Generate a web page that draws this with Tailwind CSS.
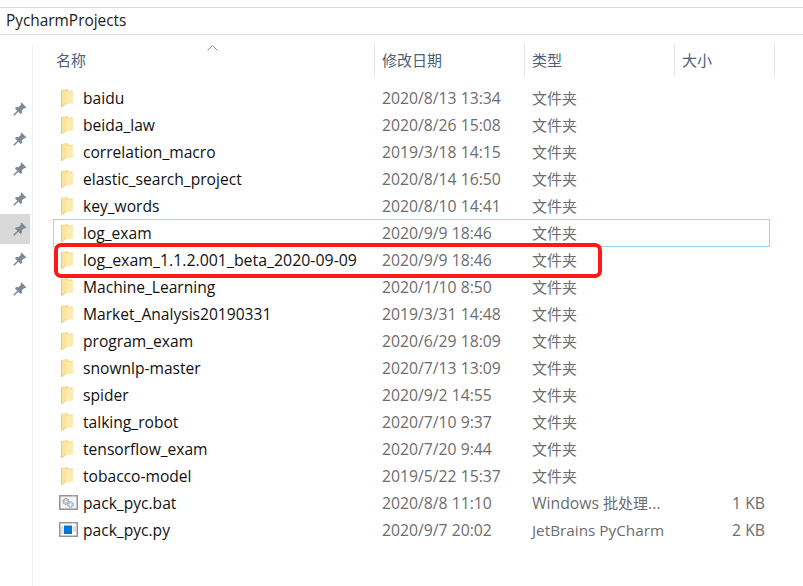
<!doctype html>
<html lang="zh">

  <head>
    <meta charset="UTF-8" />
    <title>PycharmProjects</title>
    <script src="https://cdn.jsdelivr.net/npm/@tailwindcss/browser@4"></script>
  </head>

  <body class="bg-white">
    <svg class="hidden">
      <symbol id="folder" viewBox="0 0 12 18">
        <path d="M0 1 L7 0 L7 1.5 L12 1.5 L12 14.5 L6 14.5 L1.5 18 L0 18 Z" fill="#f5d98a"/>
        <path d="M2.5 4 L7 2.5 L12 2.5 L12 14 L2.5 14 Z" fill="#fdeab0"/>
        <path d="M1 2 L5.5 1 L5.5 13 L1 16.5 Z" fill="#fce39c"/>
        <path d="M0 1 L0 18 L1 17.5 L1 1.5 Z" fill="#e9cb7c"/>
      </symbol>
      <symbol id="pin" viewBox="0 0 14 14">
        <path d="M8.6 0.6 L13.4 5.4 L12.2 6.4 L11.2 6 L8.8 8.6 L9 11 L7.6 12 L2 6.4 L3 5 L5.4 5.2 L8 2.8 L7.6 1.8 Z" fill="#7e8992"/>
        <path d="M5 9 L0.8 13.2" stroke="#7e8992" stroke-width="1.5"/>
      </symbol>
    </svg>

    <div class="h-[586px] overflow-hidden relative font-['Open_Sans','Noto_Sans_CJK_SC',sans-serif]">

      <!-- Path bar -->
      <div class="mt-[7px] h-[28px] border-y border-[#dcdcdc] px-[6px] pb-[1px] flex items-center text-[15.4px] text-[#222]">PycharmProjects</div>

      <div class="flex pt-[9px]">
        <!-- Quick access pins -->
        <div class="w-[33px] h-[542px] border-r border-[#f0f0f0] pt-[50px] flex flex-col">
          <div class="h-[30px] w-[30px] pl-[13px] flex items-center"><svg class="w-[14px] h-[14px]"><use href="#pin"/></svg></div>
          <div class="h-[30px] w-[30px] pl-[13px] flex items-center"><svg class="w-[14px] h-[14px]"><use href="#pin"/></svg></div>
          <div class="h-[30px] w-[30px] pl-[13px] flex items-center"><svg class="w-[14px] h-[14px]"><use href="#pin"/></svg></div>
          <div class="h-[30px] w-[30px] pl-[13px] flex items-center"><svg class="w-[14px] h-[14px]"><use href="#pin"/></svg></div>
          <div class="h-[30px] w-[30px] pl-[13px] flex items-center bg-[#d9d9d9]"><svg class="w-[14px] h-[14px]"><use href="#pin"/></svg></div>
          <div class="h-[30px] w-[30px] pl-[13px] flex items-center"><svg class="w-[14px] h-[14px]"><use href="#pin"/></svg></div>
          <div class="h-[30px] w-[30px] pl-[13px] flex items-center"><svg class="w-[14px] h-[14px]"><use href="#pin"/></svg></div>
        </div>

        <!-- File list -->
        <div class="flex-1">
          <div class="grid grid-cols-[342px_150px_150px_100px] h-[32px] text-[15px] text-[#4c607a]">
            <div class="relative pl-[23px] flex items-center border-r border-[#e5e5e5]">名称
              <svg class="absolute left-[174px] top-[1px] w-[11px] h-[6px]" viewBox="0 0 11 6" fill="none" stroke="#8a8a8a"><path d="M0.5 5.5 L5.5 0.5 L10.5 5.5"/></svg>
            </div>
            <div class="pl-[7px] flex items-center border-r border-[#e5e5e5]">修改日期</div>
            <div class="pl-[7px] flex items-center border-r border-[#e5e5e5]">类型</div>
            <div class="pl-[7px] flex items-center border-r border-[#e5e5e5]">大小</div>
          </div>

          <div class="mt-[8px] ml-[20px] w-[717px] text-[15.75px] leading-[24px] text-[#6d6d6d]">
            <div class="grid grid-cols-[322px_150px_150px_95px] h-[27px] pt-[1px] items-center"><div class="flex items-center gap-[10px] pl-[8px] text-[#111] text-[15.6px]"><svg class="w-[12px] h-[18px]"><use href="#folder"/></svg>baidu</div><div class="pl-[7px]">2020/8/13 13:34</div><div class="pl-[7px] text-[15px]">文件夹</div></div>
            <div class="grid grid-cols-[322px_150px_150px_95px] h-[27px] pt-[1px] items-center"><div class="flex items-center gap-[10px] pl-[8px] text-[#111] text-[15.6px]"><svg class="w-[12px] h-[18px]"><use href="#folder"/></svg>beida_law</div><div class="pl-[7px]">2020/8/26 15:08</div><div class="pl-[7px] text-[15px]">文件夹</div></div>
            <div class="grid grid-cols-[322px_150px_150px_95px] h-[27px] pt-[1px] items-center"><div class="flex items-center gap-[10px] pl-[8px] text-[#111] text-[15.6px]"><svg class="w-[12px] h-[18px]"><use href="#folder"/></svg>correlation_macro</div><div class="pl-[7px]">2019/3/18 14:15</div><div class="pl-[7px] text-[15px]">文件夹</div></div>
            <div class="grid grid-cols-[322px_150px_150px_95px] h-[27px] pt-[1px] items-center"><div class="flex items-center gap-[10px] pl-[8px] text-[#111] text-[15.6px]"><svg class="w-[12px] h-[18px]"><use href="#folder"/></svg>elastic_search_project</div><div class="pl-[7px]">2020/8/14 16:50</div><div class="pl-[7px] text-[15px]">文件夹</div></div>
            <div class="grid grid-cols-[322px_150px_150px_95px] h-[27px] pt-[1px] items-center"><div class="flex items-center gap-[10px] pl-[8px] text-[#111] text-[15.6px]"><svg class="w-[12px] h-[18px]"><use href="#folder"/></svg>key_words</div><div class="pl-[7px]">2020/8/10 14:41</div><div class="pl-[7px] text-[15px]">文件夹</div></div>
            <div class="relative grid grid-cols-[322px_150px_150px_95px] h-[27px] pt-[1px] items-center"><div class="absolute inset-x-0 top-0 -bottom-px border border-[#99d1ff]"></div><div class="flex items-center gap-[10px] pl-[8px] text-[#111] text-[15.6px]"><svg class="w-[12px] h-[18px]"><use href="#folder"/></svg>log_exam</div><div class="pl-[7px]">2020/9/9 18:46</div><div class="pl-[7px] text-[15px]">文件夹</div></div>
            <div class="grid grid-cols-[322px_150px_150px_95px] h-[27px] pt-[1px] items-center"><div class="flex items-center gap-[10px] pl-[8px] text-[#111] text-[15.9px]"><svg class="w-[12px] h-[18px]"><use href="#folder"/></svg>log_exam_1.1.2.001_beta_2020-09-09</div><div class="pl-[7px]">2020/9/9 18:46</div><div class="pl-[7px] text-[15px]">文件夹</div></div>
            <div class="grid grid-cols-[322px_150px_150px_95px] h-[27px] pt-[1px] items-center"><div class="flex items-center gap-[10px] pl-[8px] text-[#111] text-[15.6px]"><svg class="w-[12px] h-[18px]"><use href="#folder"/></svg>Machine_Learning</div><div class="pl-[7px]">2020/1/10 8:50</div><div class="pl-[7px] text-[15px]">文件夹</div></div>
            <div class="grid grid-cols-[322px_150px_150px_95px] h-[27px] pt-[1px] items-center"><div class="flex items-center gap-[10px] pl-[8px] text-[#111] text-[15.6px]"><svg class="w-[12px] h-[18px]"><use href="#folder"/></svg>Market_Analysis20190331</div><div class="pl-[7px]">2019/3/31 14:48</div><div class="pl-[7px] text-[15px]">文件夹</div></div>
            <div class="grid grid-cols-[322px_150px_150px_95px] h-[27px] pt-[1px] items-center"><div class="flex items-center gap-[10px] pl-[8px] text-[#111] text-[15.6px]"><svg class="w-[12px] h-[18px]"><use href="#folder"/></svg>program_exam</div><div class="pl-[7px]">2020/6/29 18:09</div><div class="pl-[7px] text-[15px]">文件夹</div></div>
            <div class="grid grid-cols-[322px_150px_150px_95px] h-[27px] pt-[1px] items-center"><div class="flex items-center gap-[10px] pl-[8px] text-[#111] text-[15.6px]"><svg class="w-[12px] h-[18px]"><use href="#folder"/></svg>snownlp-master</div><div class="pl-[7px]">2020/7/13 13:09</div><div class="pl-[7px] text-[15px]">文件夹</div></div>
            <div class="grid grid-cols-[322px_150px_150px_95px] h-[27px] pt-[1px] items-center"><div class="flex items-center gap-[10px] pl-[8px] text-[#111] text-[15.6px]"><svg class="w-[12px] h-[18px]"><use href="#folder"/></svg>spider</div><div class="pl-[7px]">2020/9/2 14:55</div><div class="pl-[7px] text-[15px]">文件夹</div></div>
            <div class="grid grid-cols-[322px_150px_150px_95px] h-[27px] pt-[1px] items-center"><div class="flex items-center gap-[10px] pl-[8px] text-[#111] text-[15.6px]"><svg class="w-[12px] h-[18px]"><use href="#folder"/></svg>talking_robot</div><div class="pl-[7px]">2020/7/10 9:37</div><div class="pl-[7px] text-[15px]">文件夹</div></div>
            <div class="grid grid-cols-[322px_150px_150px_95px] h-[27px] pt-[1px] items-center"><div class="flex items-center gap-[10px] pl-[8px] text-[#111] text-[15.6px]"><svg class="w-[12px] h-[18px]"><use href="#folder"/></svg>tensorflow_exam</div><div class="pl-[7px]">2020/7/20 9:44</div><div class="pl-[7px] text-[15px]">文件夹</div></div>
            <div class="grid grid-cols-[322px_150px_150px_95px] h-[27px] pt-[1px] items-center"><div class="flex items-center gap-[10px] pl-[8px] text-[#111] text-[15.6px]"><svg class="w-[12px] h-[18px]"><use href="#folder"/></svg>tobacco-model</div><div class="pl-[7px]">2019/5/22 15:37</div><div class="pl-[7px] text-[15px]">文件夹</div></div>
            <div class="grid grid-cols-[322px_150px_150px_95px] h-[27px] pt-[1px] items-center">
              <div class="flex items-center gap-[5px] pl-[6px] text-[#111] text-[15.6px]">
                <svg class="w-[19px] h-[15px] -mt-[2px]" viewBox="0 0 19 15">
                  <rect x="0.75" y="0.75" width="17.5" height="13.5" fill="#f4f4f4" stroke="#949494" stroke-width="1.5"/>
                  <path d="M13 1H17" stroke="#d8d8d8" stroke-dasharray="1 1"/>
                  <circle cx="7" cy="6.5" r="3" fill="#c9c9c9" stroke="#8a8a8a" stroke-dasharray="1.5 0.7"/>
                  <circle cx="7" cy="6.5" r="1" fill="#fff"/>
                  <circle cx="11.5" cy="9.5" r="2.8" fill="#bcd9f2" stroke="#6f9fc8" stroke-dasharray="1.5 0.7"/>
                  <circle cx="11.5" cy="9.5" r="0.9" fill="#fff"/>
                </svg>pack_pyc.bat</div>
              <div class="pl-[7px]">2020/8/8 11:10</div><div class="pl-[7px]">Windows <span class="text-[15px]">批处理</span>...</div><div class="text-right pr-[5px]">1 KB</div>
            </div>
            <div class="grid grid-cols-[322px_150px_150px_95px] h-[27px] pt-[1px] items-center">
              <div class="flex items-center gap-[5px] pl-[6px] text-[#111] text-[15.6px]">
                <svg class="w-[19px] h-[15px] -mt-[2px]" viewBox="0 0 19 15">
                  <rect x="0.75" y="0.75" width="17.5" height="13.5" fill="#fff" stroke="#949494" stroke-width="1.5"/>
                  <path d="M13 1H17" stroke="#d8d8d8" stroke-dasharray="1 1"/>
                  <rect x="5" y="3.5" width="8" height="8.5" fill="#0078d7"/>
                  <path d="M2 5H4.5M2 7H4.5M2 9H4.5M2 11H4.5M14 5H17M14 7H17M14 9H17" stroke="#a9c4dc"/>
                </svg>pack_pyc.py</div>
              <div class="pl-[7px]">2020/9/7 20:02</div><div class="pl-[7px] text-[15.3px]">JetBrains PyCharm</div><div class="text-right pr-[5px]">2 KB</div>
            </div>
          </div>
        </div>
      </div>

      <!-- Red annotation -->
      <div class="absolute left-[54px] top-[243px] w-[548px] h-[35px] border-[4px] border-[#fa1a1a] rounded-[7px]"></div>
    </div>
  </body>

</html>
